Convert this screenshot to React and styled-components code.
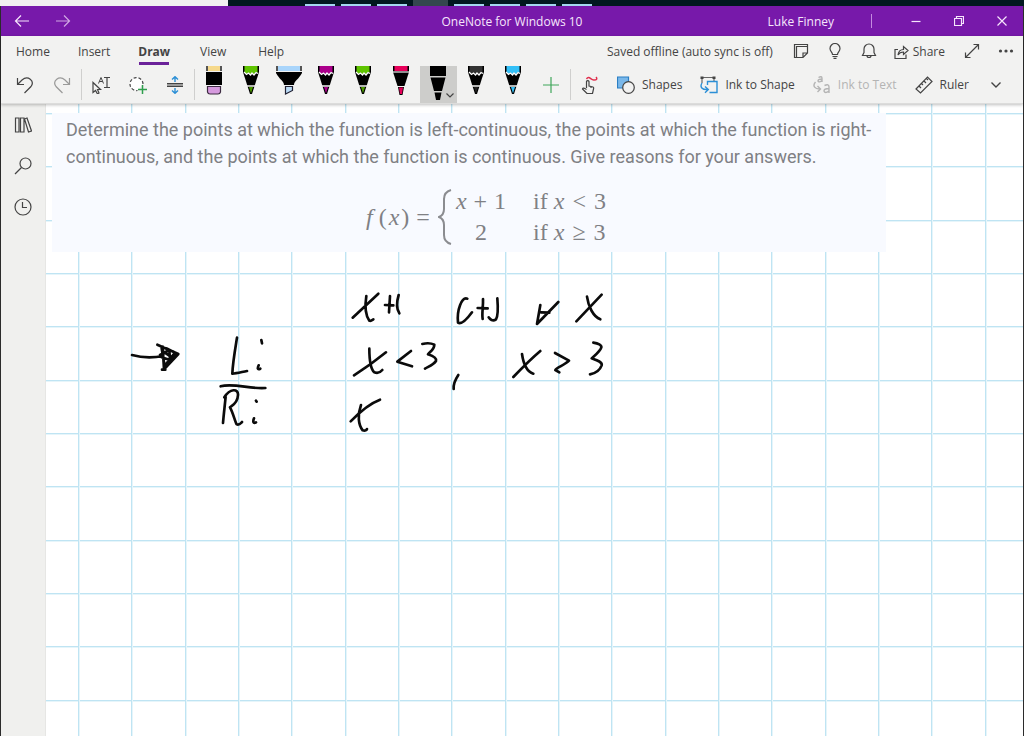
import React, {useState} from "react";
import styled, {createGlobalStyle} from "styled-components";

const GlobalStyle = createGlobalStyle`
	* {
		box-sizing: border-box;
	}
	body {
		margin: 0;
		font-family: "Open Sans", "Noto Sans", sans-serif;
		font-size: 12px;
		color: #444;
	}
	button {
		font: inherit;
		color: inherit;
		border: 0;
		padding: 0;
		background: none;
		cursor: pointer;
	}
	svg {
		display: block;
		flex: none;
	}
`

const Window = styled.div`
	display: flex;
	flex-direction: column;
	min-height: 100vh;
`
const Frame = styled.div`
	display: flex;
	flex-direction: column;
	flex: 1;
	border: solid #2b2b2b;
	border-width: 0 1px;
`

const Taskbar = styled.div`
	display: flex;
	align-items: flex-end;
	height: 6px;
	background: #021820;
`
const TaskbarSearch = styled.div`
	width: 228px;
	height: 6px;
	margin-right: 77px;
	background: #f1f0f0;
`
const TaskbarApp = styled.div`
	width: ${(props) => (props.$active ? "35px" : "30px")};
	height: ${(props) => (props.$active ? "6px" : "2px")};
	margin-right: 6px;
	background: ${(props) => (props.$active ? "#34474f" : "#a5d8f0")};
	border-bottom: ${(props) => (props.$active ? "0" : "2px solid #a5d8f0")};
`

const TitleBar = styled.header`
	display: grid;
	grid-template-columns: 1fr auto 1fr;
	align-items: center;
	height: 30px;
	background: #7719aa;
	color: #f6e6fc;
`
const TitleLeft = styled.div`
	display: flex;
`
const TitleRight = styled.div`
	display: flex;
	align-items: center;
	justify-content: flex-end;
`
const NavButton = styled.button`
	display: flex;
	align-items: center;
	justify-content: center;
	width: 41px;
	height: 30px;
	opacity: ${(props) => (props.$faded ? 0.7 : 1)};
`
const Title = styled.h1`
	margin: 0;
	padding-top: 1px;
	font-size: 12px;
	font-weight: 400;
`
const UserName = styled.span`
	padding: 1px 37px 0 0;
`
const TitleDivider = styled.span`
	width: 1px;
	height: 14px;
	margin-right: 22px;
	background: #c48be0;
`
const WindowButton = styled(NavButton)`
	width: 43px;
`

const Ribbon = styled.div`
	position: relative;
	background: #f2f2f1;
	border-bottom: 1px solid #dcdcdb;
	box-shadow: 0 1px 3px rgba(0, 0, 0, 0.25);
`
const TabRow = styled.nav`
	display: flex;
	height: 30px;
	padding-left: 1px;
`
const Tab = styled.button`
	display: flex;
	flex-direction: column;
	align-items: center;
	padding: 7px 14px 0;
	line-height: 18px;
	font-weight: ${(props) => (props.$active ? 700 : 400)};

	&::after {
		content: "";
		width: 30px;
		height: 3px;
		margin-top: 1px;
		background: ${(props) => (props.$active ? "#6b2299" : "transparent")};
	}
`
const TabActions = styled.div`
	display: flex;
	align-items: center;
	margin-left: auto;
`
const SyncStatus = styled.span`
	padding-right: 11px;
`
const ActionButton = styled.button`
	display: flex;
	align-items: center;
	justify-content: center;
	width: 34px;
	height: 30px;
`
const ShareButton = styled.button`
	display: flex;
	align-items: center;
	gap: 4px;
	height: 30px;
	margin-right: 2px;
	padding: 0 8px;
`

const ToolRow = styled.div`
	display: flex;
	height: 37px;
	padding-left: 5px;
`
const ToolButton = styled.button`
	display: flex;
	align-items: center;
	justify-content: center;
	width: 37px;
	height: 37px;
	opacity: ${(props) => (props.$faded ? 0.5 : 1)};
`
const Separator = styled.span`
	width: 1px;
	height: 31px;
	margin: 3px 0 0 1px;
	background: #cfcfce;
`
const PenTray = styled.div`
	display: flex;
	width: 337px;
`
const PenButton = styled.button`
	position: relative;
	display: flex;
	flex: 1;
	justify-content: center;
	height: 37px;
	background: ${(props) => (props.$active ? "#cdcdcb" : "none")};
`
const PenMore = styled.span`
	position: absolute;
	right: 3px;
	bottom: 4px;
`
const LabelButton = styled.button`
	display: flex;
	align-items: center;
	gap: 7px;
	padding: 0 9px;
	white-space: nowrap;
	color: ${(props) => (props.disabled ? "#b4b4b4" : "#444")};
`

const Body = styled.div`
	display: flex;
	flex: 1;
`
const Sidebar = styled.aside`
	display: flex;
	flex-direction: column;
	width: 45px;
	background: #f0f0ee;
	border-right: 1px solid #e6e6e4;
`
const SideButton = styled.button`
	display: flex;
	align-items: center;
	justify-content: center;
	height: 41px;
`

const ruled = "#bfe4f3 1px, #e6f5fa 1px 2px, transparent 2px 53px, #bfe4f3 53px 54px, #e6f5fa 54px 55px, transparent 55px 107px, #bfe4f3 107px 108px, #e6f5fa 108px 109px, transparent 109px";

/* 160px tile holds three squares of the ruled paper */
const Paper = styled.main`
	flex: 1;
	min-width: 0;
	padding: 9px 5px 0 6px;
	background-color: #fff;
	background-image: linear-gradient(90deg, ${ruled}), linear-gradient(${ruled});
	background-size: 160px 160px;
	background-position: 32px 9px;
`
const Problem = styled.section`
	max-width: 834px;
	padding: 3px 0 4px 14px;
	background: #f8faff;
	color: #7f8084;
`
const Question = styled.p`
	margin: 0;
	font: 400 18px/27px Roboto, sans-serif;
`
const Formula = styled.div`
	display: flex;
	align-items: center;
	justify-content: center;
	gap: 7px;
	margin-top: 16px;
	padding-left: 20px;
	font: 24px/31px "Liberation Serif", serif;
`
const Cases = styled.div`
	display: grid;
	grid-template-columns: auto auto;
	column-gap: 27px;
	margin-left: -3px;
`
const CaseValue = styled.span`
	text-align: center;
`
const Relation = styled.span`
	margin: 0 ${(props) => (props.$wide ? "2px" : "1px")};
`
const Argument = styled.i`
	margin: 0 2px;
`
const Ink = styled.svg`
	margin: 28px 0 0 68px;
	fill: none;
	stroke: #0b0b0b;
	stroke-width: 8;
	stroke-linecap: round;
	stroke-linejoin: round;
`

const Icon = ({size = 18, stroke = "currentColor", children}) => (
	<svg width={size} height={size} viewBox={`0 0 ${size} ${size}`} fill="none" stroke={stroke} strokeWidth="1.2">
		{children}
	</svg>
);

const Pencil = ({color, tip}) => (
	<svg width="16" height="30" viewBox="0 0 16 30">
		<path d="M0 0H16V6L9 28H7L0 6Z" fill="#000"/>
		<path d="M1.500 0H14.500V7L12.500 6L11 8.500L9 6.500L7.500 8.500L5.500 6.500L3.500 8L1.500 6Z" fill={color}/>
		<path d="M1 6L3.500 8.500L5.500 7L7.500 9L9 7L11 9L13 6.500L15 7.500" fill="none" stroke="#fff" strokeWidth="1.300"/>
		<path d="M4 20H12" stroke="#f2f2f1" strokeWidth="1.500"/>
		<path d="M6 21H10L8 27.500Z" fill={tip || color}/>
	</svg>
);

const Marker = ({color}) => (
	<svg width="16" height="34" viewBox="0 0 16 34">
		<path d="M0 0H16V6L11.500 20H4.500L0 6Z" fill="#000"/>
		<path d="M1.500 0H14.500V5H1.500Z" fill={color}/>
		<path d="M0 6H16" stroke="#f2f2f1" strokeWidth="1.200"/>
		<path d="M5 21H11L9.500 29H6.500Z" fill="#000"/>
		<path d="M6 21.500H10L9 28H7Z" fill={color}/>
	</svg>
);

const BigMarker = () => (
	<svg width="18" height="36" viewBox="0 0 18 36">
		<path d="M1 0H17V10H1ZM1.500 11.500H16.500L13 25H5Z" fill="#000"/>
		<path d="M5.500 26.500H12.500L11 34H7Z" fill="#000"/>
	</svg>
);

const Eraser = () => (
	<svg width="16" height="30" viewBox="0 0 16 30">
		<path d="M1 0V5M15 0V5" stroke="#222" strokeWidth="1.500"/>
		<path d="M2 0H14V5H2Z" fill="#f6d98b"/>
		<path d="M0 6H16V19H0Z" fill="#000"/>
		<path d="M1.500 20.500H14.500V26Q14 28 12 28H4Q2 28 1.500 26Z" fill="#d69ade" stroke="#3d2b42" strokeWidth="1.200"/>
	</svg>
);

const Highlighter = () => (
	<svg width="26" height="30" viewBox="0 0 26 30">
		<path d="M1 0V5M25 0V5" stroke="#222" strokeWidth="1.500"/>
		<path d="M2 0H24V5H2Z" fill="#a9d5fb"/>
		<path d="M0 6H26V7C23 13 18 15 18 19H8C8 15 3 13 0 7Z" fill="#000"/>
		<path d="M9.500 20.500H16.500V24.500L9.500 28Z" fill="#bcdcf8" stroke="#223" strokeWidth="1.200"/>
	</svg>
);

const pens = [
	{name: "Eraser", art: <Eraser/>},
	{name: "Green pencil", art: <Pencil color="#5fc400" tip="#4c9a00"/>},
	{name: "Highlighter", art: <Highlighter/>},
	{name: "Purple pencil", art: <Pencil color="#ab008b"/>},
	{name: "Lime pencil", art: <Pencil color="#5fc400" tip="#4c9a00"/>},
	{name: "Red pen", art: <Marker color="#e8005a"/>},
	{name: "Black pen", art: <BigMarker/>},
	{name: "Dark pencil", art: <Pencil color="#333" tip="#222"/>},
	{name: "Blue pencil", art: <Pencil color="#33c0f8"/>},
];

const Header = () => (
	<TitleBar>
		<TitleLeft>
			<NavButton aria-label="Back">
				<Icon size={16}><path d="M15 8H1.500M7 2.500L1.500 8L7 13.500"/></Icon>
			</NavButton>
			<NavButton aria-label="Forward" $faded>
				<Icon size={16}><path d="M1 8H14.500M9 2.500L14.500 8L9 13.500"/></Icon>
			</NavButton>
		</TitleLeft>
		<Title>OneNote for Windows 10</Title>
		<TitleRight>
			<UserName>Luke Finney</UserName>
			<TitleDivider/>
			<WindowButton aria-label="Minimize">
				<Icon size={10}><path d="M0.500 5.500H9.500"/></Icon>
			</WindowButton>
			<WindowButton aria-label="Restore">
				<Icon size={10}><path d="M0.500 2.500H7.500V9.500H0.500ZM2.500 2.500V0.500H9.500V7.500H7.500"/></Icon>
			</WindowButton>
			<WindowButton aria-label="Close">
				<Icon size={10}><path d="M0.500 0.500L9.500 9.500M9.500 0.500L0.500 9.500"/></Icon>
			</WindowButton>
		</TitleRight>
	</TitleBar>
);

const Tabs = () => {
	const [active, setActive] = useState("Draw");
	return (
		<TabRow>
			{["Home", "Insert", "Draw", "View", "Help"].map((tab) => (
				<Tab key={tab} $active={tab === active} onClick={() => setActive(tab)}>{tab}</Tab>
			))}
			<TabActions>
				<SyncStatus>Saved offline (auto sync is off)</SyncStatus>
				<ActionButton aria-label="Sticky notes">
					<Icon size={16}><path d="M1.500 1.500H14.500V10L10 14.500H1.500ZM14.500 10H10V14.500M3.500 14V3.500H14"/></Icon>
				</ActionButton>
				<ActionButton aria-label="Tell me">
					<Icon size={16}><path d="M5.500 11.500C5.500 9 3 8.500 3 5.500A5 5 0 0 1 13 5.500C13 8.500 10.500 9 10.500 11.500ZM5.500 13.500H10.500M6.500 15.400H9.500"/></Icon>
				</ActionButton>
				<ActionButton aria-label="Notifications">
					<Icon size={16}><path d="M1.500 12.500H14.500L13 9.500V6A5 5 0 0 0 3 6V9.500ZM6 12.500A2 2 0 0 0 10 12.500"/></Icon>
				</ActionButton>
				<ShareButton>
					<Icon size={15}><path d="M4 5.500H1V14.500H12V10.500M4 11C4.500 7 6.500 5.500 9.500 5.500V2.500L14 6.500L9.500 10.500V8C7 8 5.500 8.500 4 11Z"/></Icon>
					Share
				</ShareButton>
				<ActionButton aria-label="Full screen">
					<Icon size={16}><path d="M1.500 14.500L14.500 1.500M9.500 1.500H14.500V6.500M1.500 9.500V14.500H6.500"/></Icon>
				</ActionButton>
				<ActionButton aria-label="More">
					<Icon size={16}>
						<g fill="currentColor" stroke="none">
							<circle cx="2.500" cy="8" r="1.600"/>
							<circle cx="8" cy="8" r="1.600"/>
							<circle cx="13.500" cy="8" r="1.600"/>
						</g>
					</Icon>
				</ActionButton>
			</TabActions>
		</TabRow>
	);
};

const Tools = () => {
	const [pen, setPen] = useState("Black pen");
	return (
		<ToolRow>
			<ToolButton aria-label="Undo">
				<Icon><path d="M1.500 2V8.500H8M1.500 8.500L6 4C12 -1 19 5 15 10.500L8.500 17"/></Icon>
			</ToolButton>
			<ToolButton aria-label="Redo" $faded>
				<Icon><path d="M16.500 2V8.500H10M16.500 8.500L12 4C6 -1 -1 5 3 10.500L9.500 17"/></Icon>
			</ToolButton>
			<Separator/>
			<ToolButton aria-label="Select objects or type text">
				<Icon>
					<path d="M1 6.500V16.500L3.500 14.500L5.500 18L7 17L5.500 13.500H8.500Z"/>
					<path d="M6.500 7.500L9 1.500L11.500 7.500M7.500 5.500H10.500" strokeWidth="1"/>
					<path d="M12 1.500H18M12 11.500H18M15 1.500V11.500"/>
				</Icon>
			</ToolButton>
			<ToolButton aria-label="Lasso select">
				<Icon>
					<path d="M14 8A6.500 6.500 0 1 0 8.500 14.500" fill="#fff" strokeDasharray="3 2"/>
					<path d="M13.500 9V18M9 13.500H18" stroke="#2f9e4d" strokeWidth="1.500"/>
				</Icon>
			</ToolButton>
			<ToolButton aria-label="Insert space">
				<Icon>
					<path d="M1 7.700H17M1 10.300H17" strokeWidth="1.400"/>
					<path d="M9 6V1M6 3.500L9 0.700L12 3.500M9 12V17M6 14.500L9 17.300L12 14.500" stroke="#2b8fd6" strokeWidth="1.400"/>
				</Icon>
			</ToolButton>
			<Separator/>
			<PenTray>
				{pens.map(({name, art}) => (
					<PenButton key={name} aria-label={name} $active={name === pen} onClick={() => setPen(name)}>
						{art}
						{name === pen && (
							<PenMore>
								<Icon size={8}><path d="M0.500 2.500L4 6L7.500 2.500"/></Icon>
							</PenMore>
						)}
					</PenButton>
				))}
			</PenTray>
			<ToolButton aria-label="Add pen">
				<Icon stroke="#3fa65a"><path d="M9 1V17M1 9H17"/></Icon>
			</ToolButton>
			<Separator/>
			<ToolButton aria-label="Draw with touch">
				<Icon>
					<path d="M5.500 12V5.500A1.300 1.300 0 0 1 8 5.500V10L12 11Q13 11.500 12.500 13L11.500 17.500H6L1.500 13Q2 11 5.500 13.500M10 10.500V12"/>
					<path d="M5.500 3C8 -1 10 4.500 13 4C16 4 16.500 2.500 15 1" stroke="#e0304e" strokeWidth="1.500"/>
				</Icon>
			</ToolButton>
			<LabelButton>
				<Icon>
					<path d="M0.500 1H11.500V12H0.500Z" fill="#7ab8ea" stroke="#2b7fc4"/>
					<circle cx="11.500" cy="11.500" r="5.800" fill="#f2f2f1"/>
				</Icon>
				Shapes
			</LabelButton>
			<LabelButton>
				<Icon>
					<path d="M2 1.500H14V5M2 1.500V7" stroke="#666"/>
					<path d="M0.500 0.500H3.500V3H0.500ZM12.500 0.500H15.500V3H12.500Z" fill="#444" stroke="none"/>
					<path d="M7.500 9V5.500H17V16.500H9.500M2 7C-0.500 11 2 14 8 13.500M5 10.500L8.300 13.500L5 16.700" stroke="#2b8fd6" strokeWidth="1.400"/>
				</Icon>
				Ink to Shape
			</LabelButton>
			<LabelButton disabled>
				<Icon>
					<path d="M5.500 1.500Q9 -0.500 9 2.500V6M9 3Q5 3 5 5Q6.500 7 9 4.500M11.500 9.500Q16 7.500 16 11V17M16 12.500Q11 12.500 11 15Q12 18 16 15" strokeWidth="1.400"/>
					<path d="M2.500 6C-1 10 2 13.500 7.500 13M4.500 10L7.500 13L4.500 16" strokeWidth="1.400"/>
				</Icon>
				Ink to Text
			</LabelButton>
			<LabelButton>
				<Icon><path d="M1 13L12.500 1L17 5.500L5.500 17ZM4 10L6 12M6.500 7.500L8 9M9 5L11 7M11.500 2.500L13 4"/></Icon>
				Ruler
			</LabelButton>
			<ToolButton aria-label="More tools">
				<Icon size={12}><path d="M1.500 3.500L6 8L10.500 3.500" strokeWidth="1.400"/></Icon>
			</ToolButton>
		</ToolRow>
	);
};

const Handwriting = () => (
	<Ink width="500" height="170" viewBox="0 0 1500 510" role="img" aria-label="Handwritten notes">
		<path d="M36 225C60 232 95 235 130 228M112 194L175 222L132 268L128 200M125 205L135 265M120 225L148 210L150 240L125 232M140 205L165 218L140 250M160 215L172 222L150 245M130 215L160 235L138 255M126 269H136"/>
		<path d="M351 173C345 210 338 250 337 281C350 280 365 276 381 273M424 180L426 190M416 256C412 265 412 270 421 266"/>
		<path d="M302 319C340 308 390 328 436 324"/>
		<path d="M317 350C314 380 311 405 309 429M313 352C330 325 355 325 354 345C353 370 335 378 330 382C340 400 345 425 350 433C358 436 362 430 366 426M408 362L410 365M402 415C398 425 400 432 408 427"/>
		<g transform="translate(660 0)">
			<path d="M38 113L115 41M79 48C74 80 76 105 88 122C93 125 97 120 100 118M135 75L160 76M150 48L147 97M176 45C170 65 168 85 178 100"/>
			<path d="M382 56C365 50 350 90 354 128C365 135 385 112 396 97M413 84L443 85M429 57C430 80 425 100 428 117M472 55C474 80 476 105 468 118C458 125 450 118 446 112"/>
			<path d="M601 75L591 132L655 66M603 97L628 98M709 124L785 44M741 50C745 80 760 110 781 118"/>
			<path d="M42 286C80 262 110 240 138 217M88 206C88 235 90 265 103 277C115 282 122 276 127 270M213 213L172 245L216 259"/>
			<path d="M247 192C262 188 275 190 283 194C283 208 270 215 264 223C280 228 290 235 288 243C280 255 265 260 255 266M355 285C345 300 340 315 341 327"/>
			<path d="M520 291C545 265 575 235 601 213M546 222C550 250 560 275 580 281M645 219L687 242C675 255 650 262 646 270L658 277"/>
			<path d="M760 188C775 190 785 195 784 202C780 215 762 228 755 235C770 240 788 245 785 256C780 270 765 280 750 283"/>
			<path d="M32 424C60 395 90 370 120 359M63 375C52 405 55 435 68 451C76 454 80 450 81 447"/>
		</g>
	</Ink>
);

const App = () => {
	return (
		<Window>
			<GlobalStyle/>
			<Taskbar>
				<TaskbarSearch/>
				{[0, 1, 2, 3, 4, 5, 6, 7].map((n) => <TaskbarApp key={n} $active={n === 3}/>)}
			</Taskbar>
			<Frame>
				<Header/>
				<Ribbon>
					<Tabs/>
					<Tools/>
				</Ribbon>
				<Body>
					<Sidebar>
						<SideButton aria-label="Notebooks">
							<Icon><path d="M1.500 2H5V16H1.500ZM6.500 2H10V16H6.500ZM10.500 3L13 2L17.500 15L14.500 16Z"/></Icon>
						</SideButton>
						<SideButton aria-label="Search">
							<Icon><circle cx="11.500" cy="6.500" r="5.500"/><path d="M7.500 10.500L1 17"/></Icon>
						</SideButton>
						<SideButton aria-label="Recent notes">
							<Icon><circle cx="9" cy="9" r="8"/><path d="M8.500 4V9.500H13"/></Icon>
						</SideButton>
					</Sidebar>
					<Paper>
						<Problem>
							<Question>
								Determine the points at which the function is left-continuous, the points at which the function is right-continuous, and the points at which the function is continuous. Give reasons for your answers.
							</Question>
							<Formula>
								<span><i>f</i>&nbsp;(<Argument>x</Argument>) <Relation>=</Relation></span>
								<svg width="14" height="56" viewBox="0 0 14 56" fill="none" stroke="#8b8c90" strokeWidth="2">
									<path d="M13 1Q6 3 6 10V20Q6 26 1 28Q6 30 6 36V46Q6 53 13 55"/>
								</svg>
								<Cases>
									<CaseValue><i>x</i> <Relation>+</Relation> 1</CaseValue>
									<span>if <i>x</i> <Relation $wide>&lt;</Relation> 3</span>
									<CaseValue>2</CaseValue>
									<span>if <i>x</i> <Relation $wide>≥</Relation> 3</span>
								</Cases>
							</Formula>
						</Problem>
						<Handwriting/>
					</Paper>
				</Body>
			</Frame>
		</Window>
	);
};

export default App;
